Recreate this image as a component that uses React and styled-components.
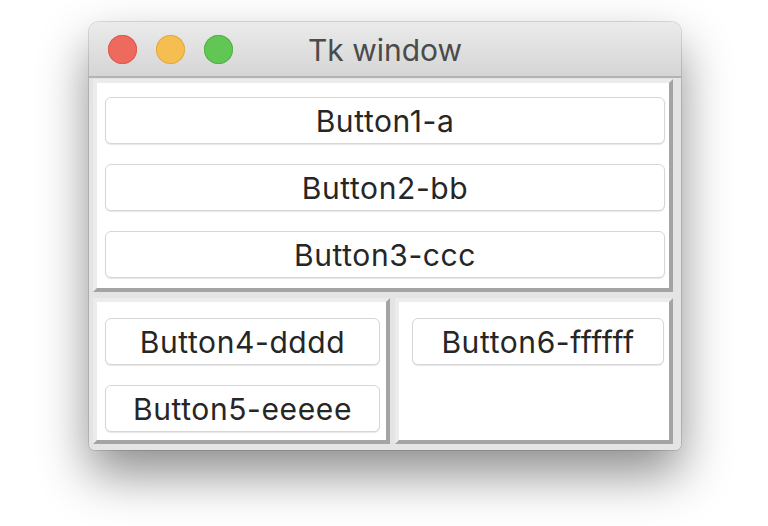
import styled, { createGlobalStyle } from 'styled-components';

const GlobalStyle = createGlobalStyle`
  html, body {
    margin: 0;
    padding: 0;
    background: #ffffff;
  }
  body {
    font-family: Inter, "Liberation Sans", sans-serif;
  }
`;

const Page = styled.div`
  width: 768px;
  height: 526px;
  padding: 22px 0 0 89px;
  box-sizing: border-box;
  overflow: hidden;
`;

const Window = styled.div`
  width: 592px;
  border-radius: 10px 10px 6px 6px;
  overflow: hidden;
  box-shadow: 0 0 0 1px rgba(0, 0, 0, 0.12), 0 24px 50px rgba(0, 0, 0, 0.45);
`;

const TitleBar = styled.div`
  height: 54px;
  display: grid;
  grid-template-columns: 1fr auto 1fr;
  align-items: center;
  padding: 0 19px;
  background: linear-gradient(#ebebeb, #d5d5d5);
  border-bottom: 2px solid #b3b3b3;
`;

const Lights = styled.div`
  display: flex;
  gap: 19px;
`;

const Light = styled.span`
  width: 29px;
  height: 29px;
  border-radius: 50%;
  background: ${(p) => p.color};
  box-shadow: inset 0 0 0 1px ${(p) => p.edge};
`;

const Title = styled.div`
  font-size: 30px;
  color: #4b4b4b;
  padding-top: 2px;
`;

const Body = styled.div`
  background: #e4e4e4;
  padding: 1px 8px 6px 4px;
  display: flex;
  flex-direction: column;
  gap: 6px;
`;

const Frame = styled.div`
  background: #ffffff;
  border-style: solid;
  border-width: 4px;
  border-color: #ececec #a4a4a4 #a4a4a4 #ececec;
  display: flex;
  flex-direction: column;
  gap: 20px;
  padding: ${(p) => p.pad};
  width: ${(p) => p.width || 'auto'};
  box-sizing: border-box;
`;

const Row = styled.div`
  display: flex;
  gap: 5px;
`;

const Button = styled.div`
  height: 47px;
  box-sizing: border-box;
  display: flex;
  align-items: center;
  justify-content: center;
  background: #ffffff;
  border: 1px solid #d6d6d6;
  border-radius: 6px;
  box-shadow: 0 1px 1px rgba(0, 0, 0, 0.1);
  font-size: 30px;
  letter-spacing: 0.6px;
  color: #262626;
`;

const App = () => {
  return (
    <Page>
      <GlobalStyle />
      <Window>
        <TitleBar>
          <Lights>
            <Light color="#ee6a5f" edge="#de5a4f" />
            <Light color="#f6be50" edge="#e2aa3e" />
            <Light color="#62c655" edge="#52b244" />
          </Lights>
          <Title>Tk window</Title>
          <span />
        </TitleBar>
        <Body>
          <Frame pad="14px 4px 10px 8px">
            <Button>Button1-a</Button>
            <Button>Button2-bb</Button>
            <Button>Button3-ccc</Button>
          </Frame>
          <Row>
            <Frame pad="16px 6px 8px 8px" width="297px">
              <Button>Button4-dddd</Button>
              <Button>Button5-eeeee</Button>
            </Frame>
            <Frame pad="16px 5px 8px 13px" width="278px">
              <Button>Button6-ffffff</Button>
            </Frame>
          </Row>
        </Body>
      </Window>
    </Page>
  );
};

export default App;
